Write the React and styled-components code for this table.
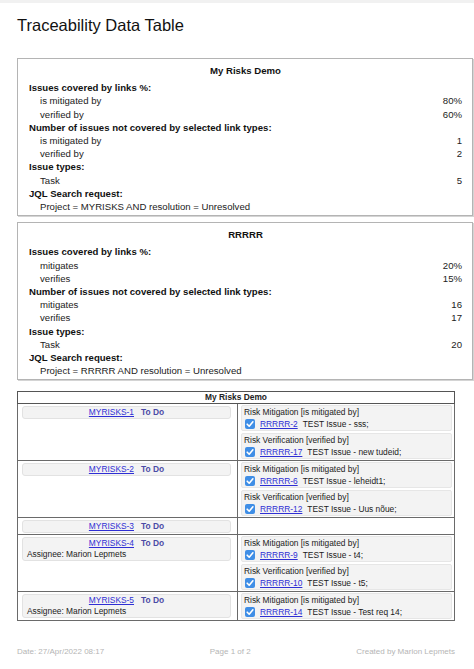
import React from 'react';
import styled, { createGlobalStyle } from 'styled-components';

const summaries = [
  {
    title: 'My Risks Demo',
    covered: [['is mitigated by', '80%'], ['verified by', '60%']],
    notCovered: [['is mitigated by', '1'], ['verified by', '2']],
    types: [['Task', '5']],
    jql: 'Project = MYRISKS AND resolution = Unresolved',
  },
  {
    title: 'RRRRR',
    covered: [['mitigates', '20%'], ['verifies', '15%']],
    notCovered: [['mitigates', '16'], ['verifies', '17']],
    types: [['Task', '20']],
    jql: 'Project = RRRRR AND resolution = Unresolved',
  },
];

const rows = [
  {
    key: 'MYRISKS-1',
    links: [
      { type: 'Risk Mitigation [is mitigated by]', key: 'RRRRR-2', summary: 'TEST Issue - sss;' },
      { type: 'Risk Verification [verified by]', key: 'RRRRR-17', summary: 'TEST Issue - new tudeid;' },
    ],
  },
  {
    key: 'MYRISKS-2',
    links: [
      { type: 'Risk Mitigation [is mitigated by]', key: 'RRRRR-6', summary: 'TEST Issue - leheidt1;' },
      { type: 'Risk Verification [verified by]', key: 'RRRRR-12', summary: 'TEST Issue - Uus nõue;' },
    ],
  },
  { key: 'MYRISKS-3', links: [] },
  {
    key: 'MYRISKS-4',
    assignee: 'Marion Lepmets',
    links: [
      { type: 'Risk Mitigation [is mitigated by]', key: 'RRRRR-9', summary: 'TEST Issue - t4;' },
      { type: 'Risk Verification [verified by]', key: 'RRRRR-10', summary: 'TEST Issue - t5;' },
    ],
  },
  {
    key: 'MYRISKS-5',
    assignee: 'Marion Lepmets',
    links: [
      { type: 'Risk Mitigation [is mitigated by]', key: 'RRRRR-14', summary: 'TEST Issue - Test req 14;' },
    ],
  },
];

const CheckIcon = () => (
  <svg width="10" height="10" viewBox="0 0 10 10">
    <rect x="0" y="0" width="10" height="10" rx="2" fill="#3f8ee6" />
    <polyline points="2.2,5.2 4.2,7.2 7.9,2.8" fill="none" stroke="#fff" strokeWidth="1.6" strokeLinecap="round" strokeLinejoin="round" />
  </svg>
);

const StatGroup = ({ label, items }) => (
  <>
    <Heading>{label}</Heading>
    {items.map(([name, value]) => (
      <Item key={name}>
        <span>{name}</span>
        <span>{value}</span>
      </Item>
    ))}
  </>
);

const App = () => (
  <>
    <GlobalStyle />
    <Page>
      <Title>Traceability Data Table</Title>
      {summaries.map((s) => (
        <StatsBox key={s.title}>
          <BoxTitle>{s.title}</BoxTitle>
          <StatGroup label="Issues covered by links %:" items={s.covered} />
          <StatGroup label="Number of issues not covered by selected link types:" items={s.notCovered} />
          <StatGroup label="Issue types:" items={s.types} />
          <Heading>JQL Search request:</Heading>
          <Item>{s.jql}</Item>
        </StatsBox>
      ))}
      <Table>
        <thead>
          <tr>
            <HeadCell colSpan={2}>My Risks Demo</HeadCell>
          </tr>
        </thead>
        <tbody>
          {rows.map((r) => (
            <tr key={r.key}>
              <LeftCell>
                <IssueBlock>
                  <IssueLine>
                    <Link href="#">{r.key}</Link>
                    <Status>To Do</Status>
                  </IssueLine>
                  {r.assignee && <div>Assignee: {r.assignee}</div>}
                </IssueBlock>
              </LeftCell>
              <RightCell>
                {r.links.map((l) => (
                  <LinkBlock key={l.key}>
                    <div>{l.type}</div>
                    <LinkLine>
                      <CheckIcon />
                      <Link href="#">{l.key}</Link>
                      <Summary>{l.summary}</Summary>
                    </LinkLine>
                  </LinkBlock>
                ))}
              </RightCell>
            </tr>
          ))}
        </tbody>
      </Table>
      <Footer>
        <span>Date: 27/Apr/2022 08:17</span>
        <span>Page 1 of 2</span>
        <span>Created by Marion Lepmets</span>
      </Footer>
    </Page>
  </>
);

const GlobalStyle = createGlobalStyle`
  body {
    margin: 0;
    background: #fff;
    font-family: 'Liberation Sans', Arial, Helvetica, sans-serif;
    color: #111;
  }
`;

const Page = styled.div`
  width: 474px;
  box-sizing: border-box;
  padding: 12px 1px 0 17px;
  border-top: 3px solid #f1f1f1;
  display: flex;
  flex-direction: column;
`;

const Title = styled.h1`
  margin: 0 0 23px;
  font-size: 16.5px;
  line-height: 20px;
  font-weight: 400;
  color: #111;
`;

const StatsBox = styled.div`
  border: 1px solid #b4b4b4;
  box-shadow: 1px 1px 0 #d4d4d4;
  padding: 5px 10px 2px 11px;
  margin-bottom: 6px;
  font-size: 9.6px;
  line-height: 13.2px;
`;

const BoxTitle = styled.div`
  font-weight: 700;
  text-align: center;
  margin-bottom: 4px;
`;

const Heading = styled.div`
  font-weight: 700;
`;

const Item = styled.div`
  display: flex;
  justify-content: space-between;
  padding-left: 11px;
  color: #222;
`;

const Table = styled.table`
  margin-top: 5px;
  width: 438px;
  border-collapse: collapse;
  border: 1px solid #555;
  font-size: 8.4px;
  line-height: 12px;
  color: #222;
`;

const HeadCell = styled.th`
  border: 1px solid #555;
  padding: 0;
  height: 11px;
  line-height: 11px;
  font-weight: 700;
  text-align: center;
`;

const LeftCell = styled.td`
  width: 209px;
  border: 1px solid #6a6a6a;
  padding: 2px 6px 1px 4px;
  vertical-align: top;
  line-height: 11px;
`;

const RightCell = styled.td`
  border: 1px solid #6a6a6a;
  padding: 1px 2px 1px 3px;
  vertical-align: top;
`;

const IssueBlock = styled.div`
  background: #f3f3f3;
  border: 1px solid #e2e2e2;
  border-radius: 3px;
  padding: 0 4px;
  line-height: 11px;
`;

const IssueLine = styled.div`
  display: flex;
  justify-content: center;
  gap: 7px;
  height: 11px;
`;

const Link = styled.a`
  color: #2f2fd4;
  text-decoration: underline;
`;

const Status = styled.span`
  color: #4b4ba6;
  font-weight: 700;
`;

const LinkBlock = styled.div`
  background: #f3f3f3;
  border: 1px solid #e6e6e6;
  border-radius: 2px;
  padding: 0 2px;
  height: 24px;
  & + & {
    margin-top: 2px;
  }
`;

const LinkLine = styled.div`
  display: flex;
  align-items: center;
  gap: 5px;
  height: 12px;
  padding-left: 1px;
`;

const Summary = styled.span`
  color: #1a1a1a;
`;

const Footer = styled.div`
  width: 438px;
  margin-top: 26px;
  display: flex;
  justify-content: space-between;
  font-size: 8px;
  line-height: 10px;
  color: #b5b5b5;
`;

export default App;
